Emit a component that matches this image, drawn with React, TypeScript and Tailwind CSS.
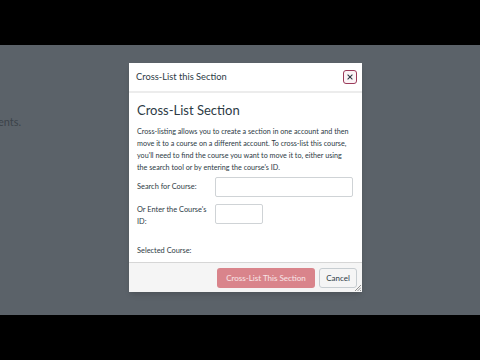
export default function App() {
  const font = { fontFamily: 'Lato, "Open Sans", sans-serif' };
  return (
    <div className="w-[480px] h-[360px] flex flex-col bg-black overflow-hidden" style={font}>
      <div className="h-[45px] bg-black" />
      <div className="relative flex-1 bg-[#5b6269] pt-[70px]">
        <p className="text-[11px] leading-[14px] text-[#3c4249] -ml-[2px]">ents.</p>

        {/* Dialog */}
        <div className="absolute left-[129px] top-[18px] w-[233px] h-[229px] bg-white flex flex-col shadow-md">
          <header className="h-[30px] flex items-center justify-between pl-[7px] pr-[5px] border-b-2 border-[#ececec]">
            <h1 className="text-[9.3px] text-[#2d3b45]">Cross-List this Section</h1>
            <button className="w-[14px] h-[14px] rounded-[3px] border border-[#9b3b5a] bg-[#fbf3f6] flex items-center justify-center">
              <svg viewBox="0 0 10 10" className="w-[6px] h-[6px]">
                <path d="M1 1L9 9M9 1L1 9" stroke="#2d3b45" strokeWidth="1.8" />
              </svg>
            </button>
          </header>

          <div className="flex-1 px-[8px] pt-[9px] text-[#2d3b45]">
            <h2 className="text-[13px] leading-[16px]">Cross-List Section</h2>
            <p className="mt-[8px] text-[7.2px] leading-[12px] pr-[2px]">
              Cross-listing allows you to create a section in one account and then move it to a course on a different
              account. To cross-list this course, you'll need to find the course you want to move it to, either using the
              search tool or by entering the course's ID.
            </p>

            <div className="mt-[3px] flex items-center">
              <label className="w-[78px] text-[7.4px]">Search for Course:</label>
              <div className="w-[138px] h-[20px] border border-[#cfd3d6] rounded-[2px]" />
            </div>

            <div className="mt-[7px] flex items-start">
              <label className="w-[78px] text-[7.4px] leading-[12px] pt-[-1px]">Or Enter the Course's ID:</label>
              <div className="w-[48px] h-[20px] border border-[#cfd3d6] rounded-[2px]" />
            </div>

            <div className="mt-[17px] text-[7.4px]">Selected Course:</div>
          </div>

          <footer className="h-[30px] bg-[#f5f5f5] border-t border-[#d6d6d6] flex items-center justify-end gap-[4px] pr-[5px] relative">
            <button className="w-[98px] h-[20px] rounded-[3px] bg-[#d9848b] text-white/80 text-[8px]">
              Cross-List This Section
            </button>
            <button className="w-[38px] h-[20px] rounded-[3px] bg-[#f5f5f5] border border-[#c7cdd1] text-[#2d3b45] text-[8px]">
              Cancel
            </button>
            <svg viewBox="0 0 6 6" className="absolute right-[1px] bottom-[1px] w-[6px] h-[6px]">
              <path d="M6 0L0 6M6 2.5L2.5 6M6 5L5 6" stroke="#777" strokeWidth="0.8" />
            </svg>
          </footer>
        </div>
      </div>
      <div className="h-[45px] bg-black" />
    </div>
  );
}
